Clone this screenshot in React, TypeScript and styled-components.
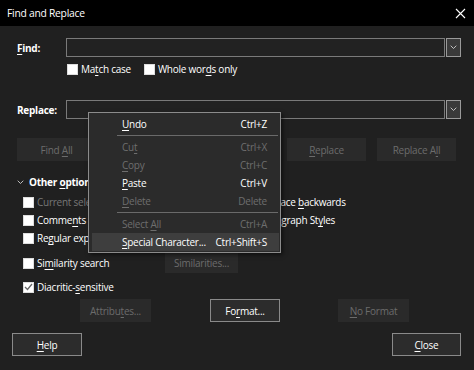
import React from "react";
import styled, { createGlobalStyle } from "styled-components";

const Global = createGlobalStyle`
  html, body { margin: 0; padding: 0; background: #202020; }
  body {
    font-family: "Open Sans", "Noto Sans", sans-serif;
    font-size: 10px;
    letter-spacing: -0.25px;
    color: #fff;
  }
`;

const Window = styled.div`
  position: relative;
  width: 474px;
  height: 370px;
  background: #202020;
  overflow: hidden;
`;

const TitleBar = styled.div`
  height: 26px;
  background: #000;
  display: flex;
  align-items: center;
  justify-content: space-between;
  padding: 0 8px 0 7px;
  font-size: 10.3px;
`;

const Body = styled.div`
  padding: 12px 13px 0 12px;
`;

const FieldRow = styled.div<{ $top?: number }>`
  display: flex;
  align-items: center;
  margin-top: ${(p) => p.$top ?? 0}px;
`;

const Label = styled.div`
  width: 49px;
  margin-left: 5px;
  font-weight: 700;
`;

const Combo = styled.div`
  flex: 1;
  display: flex;
  height: 19px;
`;

const Input = styled.div`
  flex: 1;
  border: 1px solid #7a7a7a;
  background: #222;
`;

const DropBtn = styled.div`
  width: 13px;
  margin-left: 1px;
  border: 1px solid #9a9a9a;
  background: #3a3a3a;
  display: flex;
  align-items: center;
  justify-content: center;
`;

const CheckRow = styled.div<{ $left: number; $top: number }>`
  display: flex;
  gap: 13px;
  margin-left: ${(p) => p.$left}px;
  margin-top: ${(p) => p.$top}px;
`;

const Check = styled.label<{ $disabled?: boolean }>`
  display: flex;
  align-items: center;
  gap: 3px;
  height: 16px;
  white-space: nowrap;
  color: ${(p) => (p.$disabled ? "#777" : "#fff")};
`;

const Box = styled.span`
  width: 11px;
  height: 11px;
  background: #fff;
  border: 1px solid #ddd;
  box-sizing: border-box;
  display: inline-flex;
  align-items: center;
  justify-content: center;
`;

const ButtonRow = styled.div<{ $top: number; $left?: number; $gap: number }>`
  display: flex;
  gap: ${(p) => p.$gap}px;
  margin-top: ${(p) => p.$top}px;
  margin-left: ${(p) => p.$left ?? 0}px;
`;

const Button = styled.div<{ $w: number; $h?: number; $disabled?: boolean }>`
  width: ${(p) => p.$w}px;
  height: ${(p) => p.$h ?? 23}px;
  box-sizing: border-box;
  display: flex;
  align-items: center;
  justify-content: center;
  white-space: nowrap;
  background: ${(p) => (p.$disabled ? "#2a2a2a" : "#2c2c2c")};
  border: 1px solid ${(p) => (p.$disabled ? "#2a2a2a" : "#8a8a8a")};
  color: ${(p) => (p.$disabled ? "#6c6c6c" : "#fff")};
`;

const Spacer = styled.div<{ $w: number }>`
  width: ${(p) => p.$w}px;
`;

const Expander = styled.div`
  display: flex;
  align-items: center;
  gap: 5px;
  margin: 13px 0 0 5px;
  font-weight: 700;
  height: 16px;
`;

const OptGrid = styled.div`
  display: grid;
  grid-template-columns: 224px 1fr;
  row-gap: 2px;
  margin: 4px 0 0 11px;
`;

const SimRow = styled.div`
  display: flex;
  align-items: center;
  margin: 7px 0 0 11px;
`;

const SimLabel = styled.div`
  width: 142px;
`;

const Footer = styled.div`
  display: flex;
  justify-content: space-between;
  margin-top: 11px;
`;

const Menu = styled.div`
  position: absolute;
  left: 88px;
  top: 112px;
  width: 191px;
  padding: 2px 0 1px;
  background: #2b2b2b;
  border: 1px solid #8c8c8c;
  box-shadow: 2px 2px 4px rgba(0, 0, 0, 0.5);
`;

const MenuItem = styled.div<{ $disabled?: boolean; $active?: boolean }>`
  display: flex;
  justify-content: space-between;
  align-items: center;
  height: 18px;
  margin: 0 1px 0 3px;
  padding: 0 12px 0 30px;
  white-space: nowrap;
  background: ${(p) => (p.$active ? "#3e3e3e" : "transparent")};
  color: ${(p) => (p.$disabled ? "#6e6e6e" : "#fff")};
`;

const Sep = styled.div`
  height: 1px;
  background: #6a6a6a;
  margin: 2px 2px 2px 28px;
`;

const U = styled.span`
  text-decoration: underline;
  text-underline-offset: 2px;
`;

const Chevron = ({ size = 8, color = "#ddd" }: { size?: number; color?: string }) => (
  <svg width={size} height={size * 0.6} viewBox="0 0 10 6">
    <path d="M1 1 L5 5 L9 1" fill="none" stroke={color} strokeWidth="1.2" />
  </svg>
);

const Tick = () => (
  <svg width="9" height="8" viewBox="0 0 9 8">
    <path d="M1 4 L3.5 6.5 L8 1" fill="none" stroke="#666" strokeWidth="1.3" />
  </svg>
);

const CB = ({ children, checked, disabled }: { children: React.ReactNode; checked?: boolean; disabled?: boolean }) => (
  <Check $disabled={disabled}>
    <Box>{checked && <Tick />}</Box>
    <span>{children}</span>
  </Check>
);

export default function App() {
  return (
    <Window>
      <Global />
      <TitleBar>
        <span>Find and Replace</span>
        <svg width="11" height="11" viewBox="0 0 11 11">
          <path d="M1 1 L10 10 M10 1 L1 10" stroke="#fff" strokeWidth="1.1" />
        </svg>
      </TitleBar>
      <Body>
        <FieldRow>
          <Label>
            <U>F</U>ind:
          </Label>
          <Combo>
            <Input />
            <DropBtn>
              <Chevron size={7} />
            </DropBtn>
          </Combo>
        </FieldRow>
        <CheckRow $left={55} $top={4}>
          <CB>
            Ma<U>t</U>ch case
          </CB>
          <CB>
            Whole wor<U>d</U>s only
          </CB>
        </CheckRow>
        <FieldRow $top={23}>
          <Label>Replace:</Label>
          <Combo>
            <Input />
            <DropBtn>
              <Chevron size={7} />
            </DropBtn>
          </Combo>
        </FieldRow>
        <ButtonRow $top={19} $left={5} $gap={11}>
          <Button $w={79} $disabled>
            Find&nbsp;<U>A</U>ll
          </Button>
          {/* Find Previous / Find Next sit under the context menu */}
          <Button $w={79} $disabled />
          <Button $w={79} $disabled />
          <Button $w={79} $disabled>
            <U>R</U>eplace
          </Button>
          <Button $w={79} $disabled>
            Replace A<U>l</U>l
          </Button>
        </ButtonRow>
        <Expander>
          <Chevron size={7} />
          <span>
            Other <U>o</U>ptions
          </span>
        </Expander>
        <OptGrid>
          <CB disabled>Current selection only</CB>
          <CB>
            Replace <U>b</U>ackwards
          </CB>
          <CB>
            Comme<U>n</U>ts
          </CB>
          <CB>
            Paragraph St<U>y</U>les
          </CB>
          <CB>
            Re<U>g</U>ular expressions
          </CB>
        </OptGrid>
        <SimRow>
          <SimLabel>
            <CB>
              Si<U>m</U>ilarity search
            </CB>
          </SimLabel>
          <Button $w={73} $h={20} $disabled>
            Similarities...
          </Button>
        </SimRow>
        <CheckRow $left={11} $top={6}>
          <CB checked>
            Diacritic-<U>s</U>ensitive
          </CB>
        </CheckRow>
        <ButtonRow $top={4} $left={68} $gap={0}>
          <Button $w={71} $disabled>
            Attribu<U>t</U>es...
          </Button>
          <Spacer $w={59} />
          <Button $w={70}>
            Fo<U>r</U>mat...
          </Button>
          <Spacer $w={58} />
          <Button $w={71} $disabled>
            <U>N</U>o Format
          </Button>
        </ButtonRow>
        <Footer>
          <Button $w={70}>
            <U>H</U>elp
          </Button>
          <Button $w={69}>
            <U>C</U>lose
          </Button>
        </Footer>
      </Body>
      <Menu>
        <MenuItem>
          <span>
            <U>U</U>ndo
          </span>
          <span>Ctrl+Z</span>
        </MenuItem>
        <Sep />
        <MenuItem $disabled>
          <span>
            Cu<U>t</U>
          </span>
          <span>Ctrl+X</span>
        </MenuItem>
        <MenuItem $disabled>
          <span>
            <U>C</U>opy
          </span>
          <span>Ctrl+C</span>
        </MenuItem>
        <MenuItem>
          <span>
            <U>P</U>aste
          </span>
          <span>Ctrl+V</span>
        </MenuItem>
        <MenuItem $disabled>
          <span>
            <U>D</U>elete
          </span>
          <span>Delete</span>
        </MenuItem>
        <Sep />
        <MenuItem $disabled>
          <span>
            Select <U>A</U>ll
          </span>
          <span>Ctrl+A</span>
        </MenuItem>
        <MenuItem $active>
          <span>
            <U>S</U>pecial Character...
          </span>
          <span>Ctrl+Shift+S</span>
        </MenuItem>
      </Menu>
    </Window>
  );
}
